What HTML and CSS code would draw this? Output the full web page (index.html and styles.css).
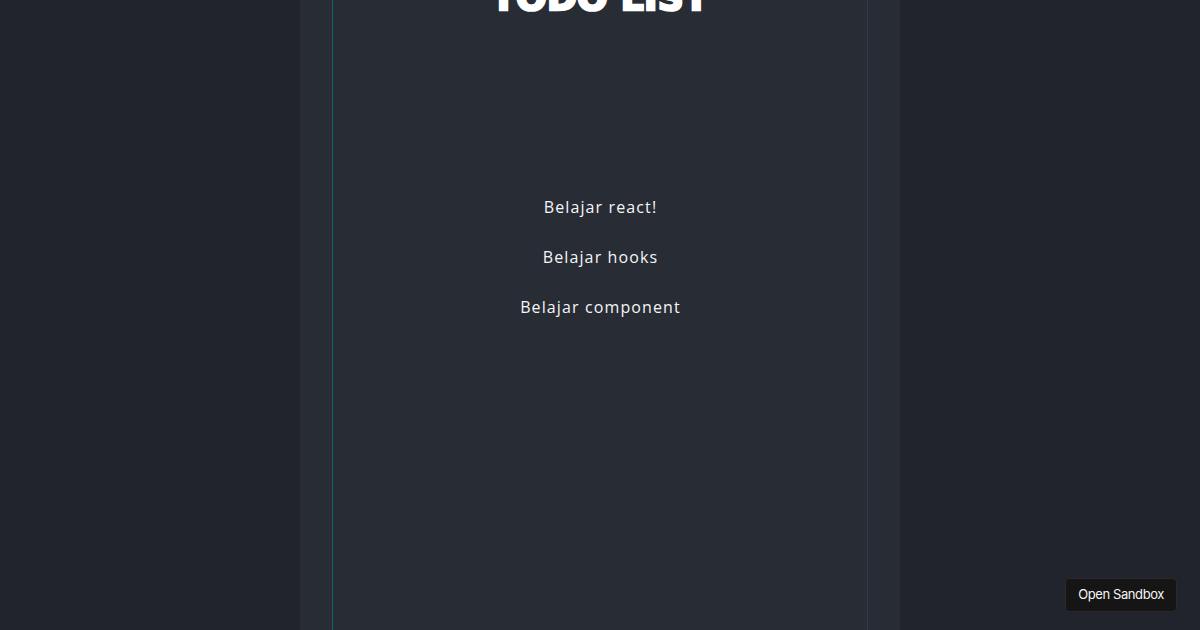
FILE: index.html
```html
<!DOCTYPE html>
<html lang="en">
  <head>
    <meta charset="UTF-8" />
    <meta name="viewport" content="width=device-width, initial-scale=1.0" />
    <title>Todo List</title>
    <link rel="stylesheet" href="styles.css">
  </head>
  <body>
    <div class="app">
      <div class="panel">
        <h1 class="title">TODO LIST</h1>
        <ul class="todoList">
          <li class="todoItem">Belajar react!</li>
          <li class="todoItem">Belajar hooks</li>
          <li class="todoItem">Belajar component</li>
        </ul>
      </div>
    </div>
    <a class="sandboxBtn" href="#">Open Sandbox</a>
  </body>
</html>
```

FILE: styles.css
```css
html,
body {
  height: 100%;
}

body {
  margin: 0;
  overflow: hidden;
  background: #21242c;
  font-family: "Open Sans", sans-serif;
}

.app {
  width: 600px;
  height: 100%;
  margin: 0 auto;
  padding: 0 32px;
  box-sizing: border-box;
  background: #282c35;
}

.panel {
  height: 100%;
  border-left: 1px solid #0e6470;
  border-right: 1px solid #343944;
  overflow: hidden;
}

.title {
  margin: -20px 0 0;
  font-family: "DejaVu Sans", sans-serif;
  font-size: 36px;
  font-weight: 700;
  line-height: 36px;
  letter-spacing: 0.3px;
  text-align: center;
  color: #fff;
  -webkit-text-stroke: 2.5px #fff;
}

.todoList {
  list-style: none;
  margin: 166px 0 0;
  padding: 0;
}

.todoItem {
  height: 50px;
  font-size: 16px;
  line-height: 50px;
  letter-spacing: 1.12px;
  text-indent: 1px;
  text-align: center;
  color: #f5f5f5;
}

.sandboxBtn {
  position: absolute;
  right: 23px;
  bottom: 18px;
  padding: 0 12px;
  height: 32px;
  line-height: 30px;
  border: 1px solid #2a2a2a;
  border-radius: 4px;
  background: #151515;
  color: #f5f5f5;
  font-family: Inter, sans-serif;
  font-size: 13px;
  letter-spacing: -0.4px;
  text-decoration: none;
}
```
